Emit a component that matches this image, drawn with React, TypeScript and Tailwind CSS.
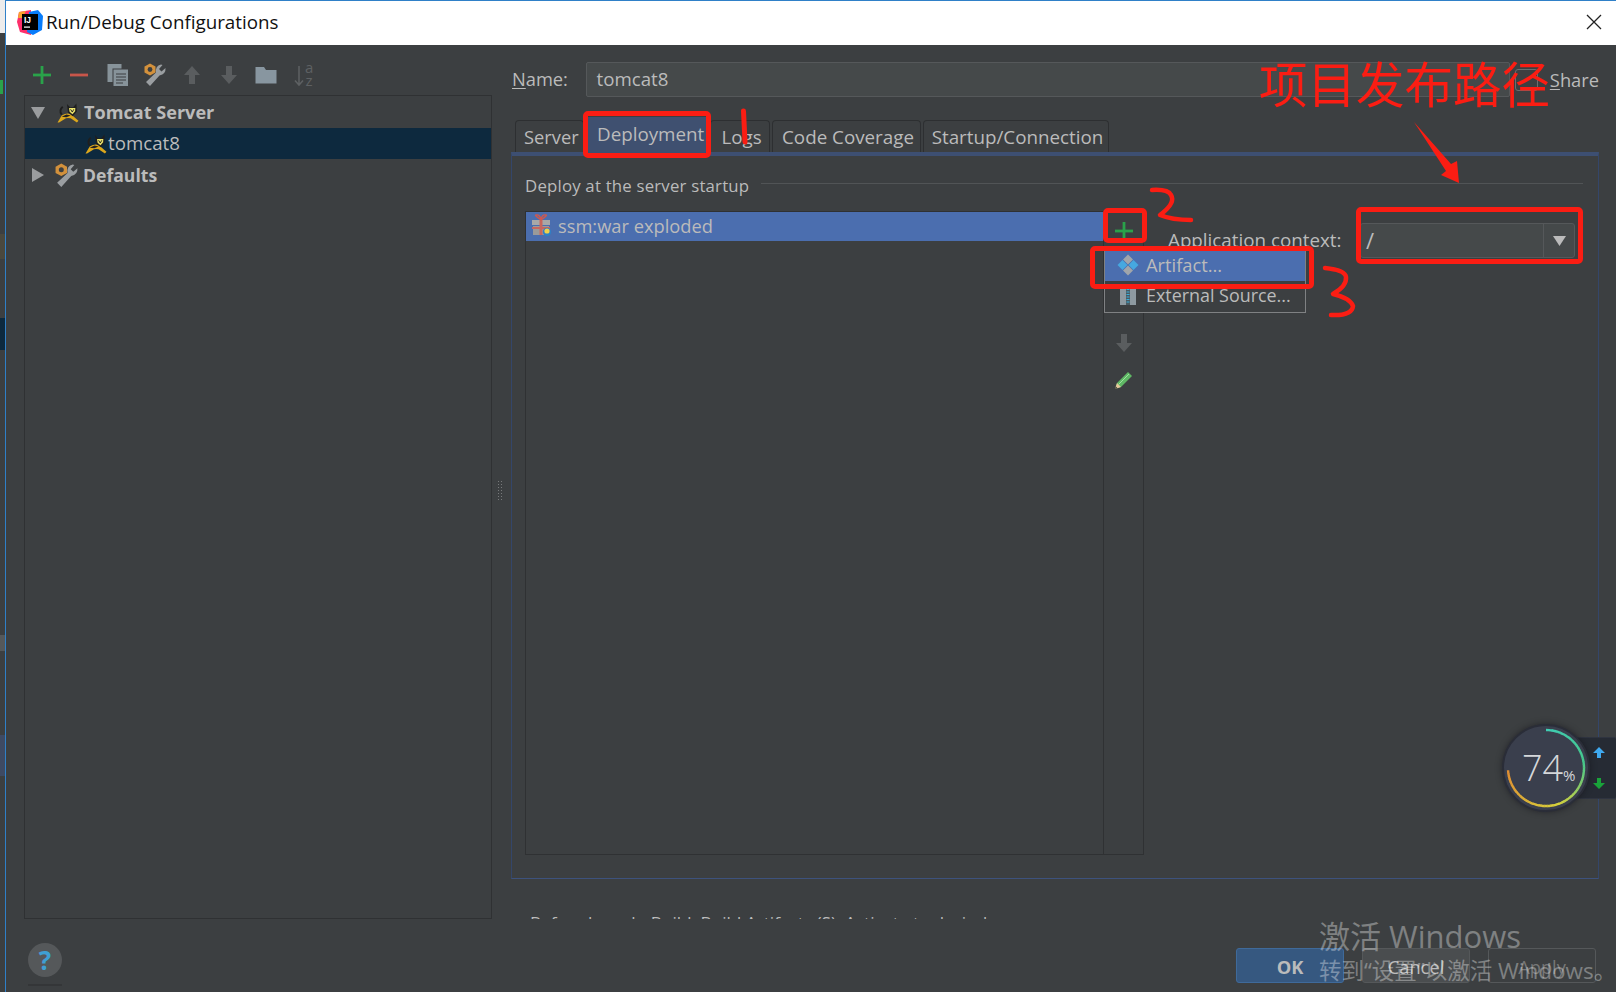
import React from "react";

const Tomcat = () => (
  <svg width="22" height="20" viewBox="0 0 21 19">
    <path d="M4.5 11 Q1.5 7 5.5 3.5" fill="none" stroke="#1f1f1f" strokeWidth="1.8" />
    <path d="M0.5 18.5 L4.5 12 Q9 9 13 10.5 L20.5 17 L19 18.5 L13 14.5 Q9 13.5 7 15.5 L2 18.5 Z" fill="#dca71c" />
    <path d="M4.5 13 L9 11 L13 12 L9 13.5 Z" fill="#222" />
    <path d="M9.5 1 L12.5 4 L15.5 4 L18.5 0.5 L19 8 L15 12.5 L10.5 9 Z" fill="#1f1f1f" />
    <path d="M11.5 4.8 L17.5 4.8 L17.3 7.8 L14.8 10.8 L12 8.4 Z" fill="#ece46c" />
    <path d="M13 6 L14.6 8.6 L16 6" fill="none" stroke="#1f1f1f" strokeWidth="0.9" />
  </svg>
);

const NutWrench = ({ s = 24 }: { s?: number }) => (
  <svg width={s} height={s} viewBox="0 0 24 24">
    <path d="M7 23 L3 19 L13 9.5 Q12 3 18 1.5 L19.5 2 L16 6 L18.5 8.5 L22.5 5 Q23 11 16.5 12.5 Z" fill="#9a9ea1" />
    <path d="M7 0.5 L12.5 3.5 L12.5 9.5 L7 12.5 L1.5 9.5 L1.5 3.5 Z" fill="#d3913c" />
    <circle cx="7" cy="6.5" r="2.4" fill="#3c3f41" />
  </svg>
);

const Plus = ({ s = 20 }: { s?: number }) => (
  <svg width={s} height={s} viewBox="0 0 20 20">
    <rect x="8.6" y="1" width="2.8" height="18" fill="#2aa24a" />
    <rect x="1" y="8.6" width="18" height="2.8" fill="#2aa24a" />
  </svg>
);

const Minus = () => (
  <svg width="20" height="20" viewBox="0 0 20 20">
    <rect x="1" y="8.6" width="18" height="2.8" fill="#c8564a" />
  </svg>
);

const Copy = () => (
  <svg width="22" height="24" viewBox="0 0 22 24">
    <rect x="0.5" y="1" width="14" height="18" fill="#87939a" />
    <rect x="6" y="6" width="15.5" height="17.5" fill="#87939a" stroke="#3c3f41" strokeWidth="1" />
    <path d="M9 11 H19 M9 14 H19 M9 17 H19 M9 20 H16" stroke="#3c3f41" strokeWidth="1.2" />
  </svg>
);

const ArrowUp = () => (
  <svg width="18" height="20" viewBox="0 0 18 20">
    <path d="M9 1 L17 10 L12 10 L12 19 L6 19 L6 10 L1 10 Z" fill="#5a5d5f" />
  </svg>
);

const ArrowDown = () => (
  <svg width="18" height="20" viewBox="0 0 18 20">
    <path d="M9 19 L17 10 L12 10 L12 1 L6 1 L6 10 L1 10 Z" fill="#5a5d5f" />
  </svg>
);

const Folder = () => (
  <svg width="22" height="18" viewBox="0 0 22 18">
    <path d="M0.5 1 H9 L11 4 H21.5 V17.5 H0.5 Z" fill="#8896a0" />
  </svg>
);

const SortAz = () => (
  <svg width="22" height="24" viewBox="0 0 22 24" className="overflow-visible">
    <path d="M5 3 V22 M1 17.5 L5 22 L9 17.5" fill="none" stroke="#5e6163" strokeWidth="1.5" />
    <text x="11" y="10" fontFamily="'Open Sans', sans-serif" fontSize="15" fill="#5e6163">a</text>
    <text x="11.5" y="22.5" fontFamily="'Open Sans', sans-serif" fontSize="15" fill="#5e6163">z</text>
  </svg>
);

const Gift = () => (
  <svg width="21" height="23" viewBox="0 0 21 23">
    <rect x="1" y="6" width="18" height="5" fill="#a8a8a8" />
    <rect x="2" y="12" width="16" height="9" fill="#9a9a9a" />
    <rect x="8.5" y="6" width="3" height="15" fill="#c7675e" />
    <rect x="1" y="13" width="18" height="2" fill="#c7675e" />
    <path d="M10 6 Q3 1 5 1 Q9 0 10 6 Q11 0 15 1 Q17 1 10 6" fill="none" stroke="#d0584e" strokeWidth="1.4" />
    <circle cx="16" cy="18" r="4.2" fill="#2f7fc6" />
    <circle cx="16" cy="17" r="2.6" fill="#f0d24a" />
  </svg>
);

const Diamonds = () => (
  <svg width="22" height="22" viewBox="0 0 22 22">
    <path d="M11 0.5 L16 5.5 L11 10.5 L6 5.5 Z" fill="#a0a5ab" />
    <path d="M5.5 6 L10.5 11 L5.5 16 L0.5 11 Z" fill="#46a8e0" />
    <path d="M16.5 6 L21.5 11 L16.5 16 L11.5 11 Z" fill="#46a8e0" />
    <path d="M11 11.5 L16 16.5 L11 21.5 L6 16.5 Z" fill="#a0a5ab" />
  </svg>
);

const Zip = () => (
  <svg width="16" height="19" viewBox="0 0 16 19">
    <rect x="0" y="0" width="16" height="19" fill="#8e9aa1" />
    <rect x="6" y="0" width="4" height="19" fill="#4a5a62" />
    <path d="M6.5 1 H9.5 M6.5 3.5 H9.5 M6.5 6 H9.5 M6.5 8.5 H9.5 M6.5 11 H9.5 M6.5 13.5 H9.5 M6.5 16 H9.5" stroke="#38b0dc" strokeWidth="1.2" />
  </svg>
);

const Pencil = () => (
  <svg width="20" height="20" viewBox="0 0 20 20">
    <path d="M1 19 L3 13 L14 2 L18 6 L7 17 Z" fill="#5fb865" />
    <path d="M1 19 L3 13 L7 17 Z" fill="#e6c79a" />
    <path d="M1 19 L1.8 16.5 L3.5 18.2 Z" fill="#333" />
    <path d="M4.5 14.5 L15 4" stroke="#9fe0a2" strokeWidth="1" />
  </svg>
);

const IJLogo = () => (
  <svg width="26" height="25" viewBox="0 0 26 25">
    <path d="M2 2 L14 0 L14 25 L3 22 L0 12 Z" fill="#fe2f6b" />
    <path d="M2 2 L9 1 L5 8 L1 8 Z" fill="#f9a12e" />
    <path d="M12 2 L21 0 L26 6 L25 20 L16 25 L10 22 Z" fill="#087cfa" />
    <rect x="5" y="4" width="16" height="16" fill="#000" />
    <text x="7" y="13" fontFamily="'Liberation Sans', sans-serif" fontWeight="700" fontSize="8.5" fill="#fff">IJ</text>
    <rect x="7" y="16.5" width="6" height="1.2" fill="#fff" />
  </svg>
);

const Triangle = ({ open }: { open: boolean }) =>
  open ? (
    <svg width="14" height="12" viewBox="0 0 14 12">
      <path d="M0 0 H14 L7 12 Z" fill="#9a9c9e" />
    </svg>
  ) : (
    <svg width="12" height="14" viewBox="0 0 12 14">
      <path d="M0 0 L12 7 L0 14 Z" fill="#9a9c9e" />
    </svg>
  );

const gaugeSegments = () => {
  const out: React.ReactElement[] = [];
  const stops = [
    [0, [64, 205, 180]],
    [0.3, [70, 200, 140]],
    [0.6, [215, 210, 60]],
    [1, [225, 140, 50]],
  ] as [number, number[]][];
  const n = 60;
  const total = 266;
  for (let i = 0; i < n; i++) {
    const t = i / n;
    let c = stops[0][1];
    for (let j = 0; j < stops.length - 1; j++) {
      if (t >= stops[j][0] && t <= stops[j + 1][0]) {
        const k = (t - stops[j][0]) / (stops[j + 1][0] - stops[j][0]);
        c = stops[j][1].map((v, q) => Math.round(v + (stops[j + 1][1][q] - v) * k));
      }
    }
    const a0 = ((t * total - 90) * Math.PI) / 180;
    const a1 = ((((i + 1.15) / n) * total - 90) * Math.PI) / 180;
    const r = 38;
    out.push(
      <path
        key={i}
        d={`M${44 + r * Math.cos(a0)} ${44 + r * Math.sin(a0)} A${r} ${r} 0 0 1 ${44 + r * Math.cos(a1)} ${44 + r * Math.sin(a1)}`}
        fill="none"
        stroke={`rgb(${c.join(",")})`}
        strokeWidth="2.4"
      />
    );
  }
  return out;
};

const RedBox = ({ className }: { className: string }) => (
  <div className={`absolute border-[5px] border-[#fb1d13] rounded-[5px] pointer-events-none ${className}`} />
);

const ToolIcon = ({ children, className }: { children: React.ReactNode; className: string }) => (
  <div className={`flex items-center justify-center ${className}`}>{children}</div>
);

export default function App() {
  return (
    <div
      className="relative w-[1616px] h-[992px] overflow-hidden flex bg-[#3c3f41] text-[#bbbbbb] text-[18.3px]"
      style={{ fontFamily: "'Open Sans', 'Noto Sans CJK SC', sans-serif" }}
    >
      {/* strip of the IDE behind the dialog */}
      <div className="relative w-[6px] shrink-0 bg-[#3c3f41] border-r border-[#2f80c8]">
        <div className="h-[33px] bg-[#ececec]" />
        <div className="mt-[47px] h-[14px] w-[3px] bg-[#2aa24a]" />
        <div className="mt-[140px] h-[25px] bg-[#4a483e]" />
        <div className="mt-[59px] h-[32px] bg-[#0d293e]" />
        <div className="mt-[285px] h-[16px] bg-[#55585a]" />
        <div className="mt-[84px] h-[41px] bg-[#3e4a63]" />
      </div>

      <div className="flex-1 flex flex-col min-w-0">
        {/* title bar */}
        <div className="h-[45px] shrink-0 bg-white border-t border-[#2f80c8] flex items-center pl-[11px] pr-[13px] pb-[2px] text-[18.8px] text-[#111]">
          <IJLogo />
          <span className="ml-[3px]">Run/Debug Configurations</span>
          <svg className="ml-auto" width="18" height="18" viewBox="0 0 18 18">
            <path d="M2 2 L16 16 M16 2 L2 16" stroke="#222" strokeWidth="1.3" />
          </svg>
        </div>

        <div className="flex-1 flex min-h-0">
          {/* left column */}
          <div className="relative w-[505px] shrink-0 pl-[18px] pt-[17px] flex flex-col">
            <div className="h-[33px] flex items-center pb-[8px]">
              <ToolIcon className="w-[20px] ml-[8px]"><Plus /></ToolIcon>
              <ToolIcon className="w-[20px] ml-[17px]"><Minus /></ToolIcon>
              <ToolIcon className="w-[22px] ml-[18px]"><Copy /></ToolIcon>
              <ToolIcon className="w-[24px] ml-[14px]"><NutWrench /></ToolIcon>
              <ToolIcon className="w-[18px] ml-[16px]"><ArrowUp /></ToolIcon>
              <ToolIcon className="w-[18px] ml-[19px]"><ArrowDown /></ToolIcon>
              <ToolIcon className="w-[22px] ml-[17px]"><Folder /></ToolIcon>
              <ToolIcon className="w-[22px] ml-[17px]"><SortAz /></ToolIcon>
            </div>
            <div className="w-[468px] h-[824px] border border-[#2f3133]">
              <div className="h-[32px] pt-[2px] flex items-center font-bold">
                <div className="w-[6px]" />
                <Triangle open />
                <div className="w-[12px]" />
                <Tomcat />
                <span className="ml-[5px] text-[18.1px]">Tomcat Server</span>
              </div>
              <div className="h-[31px] bg-[#0d293e] flex items-center pl-[60px]">
                <Tomcat />
                <span className="ml-[1px] text-[18.7px]">tomcat8</span>
              </div>
              <div className="h-[32px] flex items-center font-bold">
                <div className="w-[7px]" />
                <Triangle open={false} />
                <div className="w-[10px]" />
                <NutWrench s={25} />
                <span className="ml-[4px] text-[17.6px]">Defaults</span>
              </div>
            </div>
            <div className="ml-[4px] mt-[24px] w-[34px] h-[34px] rounded-full bg-[#55585a] flex items-center justify-center text-[#3f9fd2] font-bold text-[26px] leading-none">
              ?
            </div>
            <div className="ml-[4px] mt-[7px] w-[34px] h-[2px] bg-[#343638]" />
            {/* splitter grip */}
            <div className="absolute left-[491px] top-[435px] w-[5px] h-[22px] bg-[radial-gradient(#77797b_1px,transparent_1px)] bg-[length:3px_3px]" />
          </div>

          {/* right column */}
          <div className="flex-1 flex flex-col pt-[17px] pr-[17px] min-w-0">
            <div className="h-[35px] flex items-center">
              <span className="w-[75px] pl-[1px] pb-[2px]"><span className="underline underline-offset-2">N</span>ame:</span>
              <div className="w-[930px] h-[35px] bg-[#45494a] border border-[#55585a] rounded-[2px] flex items-center pl-[10px] text-[18.7px]">tomcat8</div>
              <div className="ml-[5px] w-[23px] h-[22px] border border-[#6b6e70] rounded-[3px]" />
              <span className="ml-[12px]"><span className="underline underline-offset-2">S</span>hare</span>
            </div>

            {/* tabs */}
            <div className="mt-[20px] h-[35px] flex items-end pl-[4px] gap-[2px] leading-none text-[18.8px]">
              <div className="w-[69px] h-[32px] pt-[2px] border border-b-0 border-[#2d2f31] rounded-t-[4px] flex items-center pl-[8px] text-[18.3px]">Server</div>
              <div className="w-[123px] h-[35px] -ml-[2px] bg-[#3f5070] flex items-start pt-[8px] pl-[13px]">Deployment</div>
              <div className="w-[60px] h-[32px] pt-[2px] pl-[3px] ml-[1px] border border-b-0 border-[#2d2f31] rounded-t-[4px] flex items-center justify-center">Logs</div>
              <div className="w-[149px] h-[32px] pt-[2px] pl-[3px] border border-b-0 border-[#2d2f31] rounded-t-[4px] flex items-center justify-center">Code Coverage</div>
              <div className="w-[186px] h-[32px] pt-[2px] pl-[3px] border border-b-0 border-[#2d2f31] rounded-t-[4px] flex items-center justify-center">Startup/Connection</div>
            </div>

            {/* tab panel */}
            <div className="w-[1088px] h-[727px] border border-[#34466a] border-t-[4px] border-t-[#3d4f72] border-b-[#3d527d] flex flex-col pl-[13px] pr-[15px]">
              <div className="mt-[15px] h-[30px] flex items-center">
                <span className="text-[16.8px] tracking-[0.2px]">Deploy at the server startup</span>
                <div className="flex-1 h-px bg-[#515456] ml-[12px] -mt-[6px]" />
              </div>
              <div className="mt-[10px] flex items-start">
                <div className="w-[619px] h-[644px] border border-[#2f3133] flex">
                  <div className="flex-1 min-w-0">
                    <div className="h-[29px] pb-[2px] bg-[#4b6eaf] flex items-center pl-[5px]">
                      <Gift />
                      <span className="ml-[6px]">ssm:war exploded</span>
                    </div>
                  </div>
                  <div className="w-[40px] border-l border-[#2f3133] flex flex-col items-center">
                    <div className="mt-[9px]"><Plus s={20} /></div>
                    <div className="mt-[92px]"><ArrowDown /></div>
                    <div className="mt-[17px]"><Pencil /></div>
                  </div>
                </div>
                <div className="ml-[24px] mt-[12px] h-[35px] flex items-center">
                  <span className="w-[192px] text-[18.8px] whitespace-nowrap">Application context:</span>
                  <div className="w-[215px] h-[35px] bg-[#45494a] border border-[#55585a] rounded-[3px] flex items-center">
                    <span className="flex-1 pl-[5px] text-[22px]">/</span>
                    <div className="w-[31px] h-full border-l border-[#55585a] flex items-center justify-center">
                      <svg width="13" height="10" viewBox="0 0 13 10"><path d="M0 0 H13 L6.5 10 Z" fill="#bbbbbb" /></svg>
                    </div>
                  </div>
                </div>
              </div>
            </div>

            {/* clipped line */}
            <div className="mt-[38px] ml-[19px] h-[2px] overflow-hidden text-[17.2px] leading-[22px] whitespace-nowrap">
              <div className="-mt-[5px]">Before launch: Build, Build Artifacts (S), Activate tool window</div>
            </div>

            {/* buttons */}
            <div className="mt-[29px] flex justify-end gap-[18px] pr-[3px]">
              <div className="w-[108px] h-[35px] pt-[3px] bg-[#365880] border border-[#3f6a9a] rounded-[3px] font-bold flex items-center justify-center">OK</div>
              <div className="w-[108px] h-[35px] pt-[3px] bg-[#4a4d4f] border border-[#55585a] rounded-[3px] flex items-center justify-center">Cancel</div>
              <div className="w-[108px] h-[35px] pt-[3px] border border-[#55585a] rounded-[3px] text-[#777] flex items-center justify-center">Apply</div>
            </div>
          </div>
        </div>
      </div>

      {/* popup menu */}
      <div className="absolute left-[1104px] top-[250px] w-[202px] h-[63px] border border-[#7f8183] border-t-0 bg-[#3c3f41]">
        <div className="h-[31px] pb-[2px] bg-[#4b6eaf] flex items-center pl-[12px]">
          <Diamonds />
          <span className="ml-[7px]">Artifact...</span>
        </div>
        <div className="h-[31px] -mt-[1px] flex items-center pl-[15px]">
          <Zip />
          <span className="ml-[10px] text-[17.9px]">External Source...</span>
        </div>
      </div>

      {/* red annotations */}
      <RedBox className="left-[583px] top-[111px] w-[128px] h-[47px]" />
      <RedBox className="left-[1103px] top-[208px] w-[44px] h-[35px]" />
      <RedBox className="left-[1090px] top-[246px] w-[224px] h-[43px]" />
      <RedBox className="left-[1356px] top-[207px] w-[227px] h-[57px]" />
      <div className="absolute left-[1259px] top-[50px] text-[#fb1d13] text-[48.5px] leading-[64px] whitespace-nowrap" style={{ fontFamily: "'Noto Sans CJK SC', sans-serif" }}>
        项目发布路径
      </div>
      <svg className="absolute left-0 top-0 pointer-events-none" width="1616" height="992" viewBox="0 0 1616 992">
        <path d="M743.5 111 L745 142" stroke="#fb1d13" strokeWidth="5" strokeLinecap="round" fill="none" />
        <path d="M1152 190 Q1168 189 1171 195 Q1176 203 1160 215 Q1172 220 1191 220" stroke="#fb1d13" strokeWidth="4.5" strokeLinecap="round" strokeLinejoin="round" fill="none" />
        <path d="M1325 268 Q1345 270 1346 277 Q1347 286 1333 294 Q1350 298 1353 306 Q1352 316 1331 315" stroke="#fb1d13" strokeWidth="4.5" strokeLinecap="round" strokeLinejoin="round" fill="none" />
        <path d="M1414 122 L1451 164 L1457 161 L1459 183 L1441 175 L1446 171 Z" fill="#fb1d13" />
      </svg>

      {/* speed widget */}
      <div className="absolute left-[1546px] top-[737px] w-[70px] h-[62px] bg-[#262b34] rounded-r-[2px] border-y border-[#2f3440]" />
      <div className="absolute left-[1599px] top-[747px] text-[#3fa9ef]">
        <svg className="-ml-[6px]" width="12" height="11" viewBox="0 0 12 11"><path d="M6 0 L12 6 L8 6 L8 11 L4 11 L4 6 L0 6 Z" fill="currentColor" /></svg>
      </div>
      <div className="absolute left-[1599px] top-[778px] text-[#19a33a]">
        <svg className="-ml-[6px]" width="12" height="11" viewBox="0 0 12 11"><path d="M6 11 L12 5 L8 5 L8 0 L4 0 L4 5 L0 5 Z" fill="currentColor" /></svg>
      </div>
      <div className="absolute left-[1502px] top-[724px] w-[88px] h-[88px] rounded-full bg-[#3a3f4d] border-[2px] border-[#2a2d38] shadow-[0_0_6px_rgba(20,20,25,0.6)]">
        <svg className="absolute -left-[2px] -top-[2px]" width="88" height="88" viewBox="0 0 88 88">
          {gaugeSegments()}
        </svg>
        <div className="absolute left-[18px] top-[12px] h-[48px] flex items-end text-[#d5d7da] font-light leading-none">
          <span className="text-[36px]">74</span>
          <span className="text-[15px] font-normal mb-[3px]">%</span>
        </div>
      </div>

      {/* activation watermark */}
      <div className="absolute left-[1319px] top-[914px] text-white/35 text-[31px] leading-[44px] whitespace-nowrap" style={{ fontFamily: "'Open Sans', 'Noto Sans CJK SC', sans-serif" }}>
        激活 Windows
      </div>
      <div className="absolute left-[1319px] top-[955px] text-white/35 text-[22.5px] leading-[32px] whitespace-nowrap" style={{ fontFamily: "'Open Sans', 'Noto Sans CJK SC', sans-serif" }}>
        转到“设置”以激活 Windows。
      </div>
    </div>
  );
}
